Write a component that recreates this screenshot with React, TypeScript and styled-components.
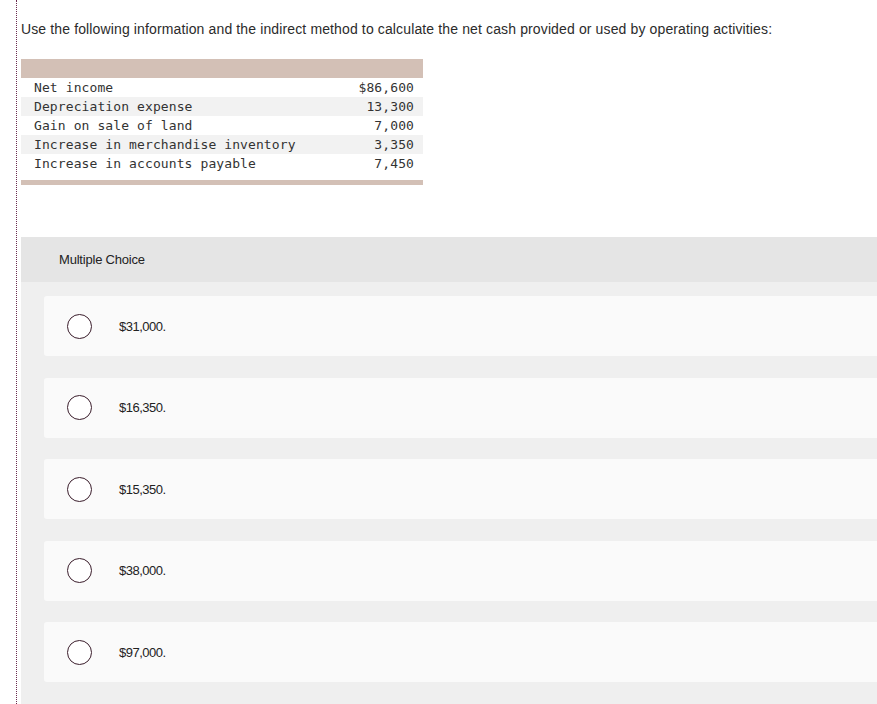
import React from "react";
import styled, { createGlobalStyle } from "styled-components";

const Global = createGlobalStyle`
    body {
        margin: 0;
        background: #fff;
        font-family: "Liberation Sans", Arial, sans-serif;
        color: #333;
    }
`

const Page = styled.div`
    margin-left: 16px;
    border-left: 1px dotted #6b2d4f;
    padding: 20px 0 0 4px;
    min-height: 100vh;
    box-sizing: border-box;
    overflow: hidden;
`

const Question = styled.p`
    margin: 0;
    font-size: 14px;
    line-height: 18px;
    letter-spacing: 0.13px;
    color: #2b2b2b;
`

const Table = styled.div`
    width: 402px;
    margin-top: 21px;
    padding-bottom: 7px;
    border-bottom: 5px solid #d3c0b6;
    font-family: "DejaVu Sans Mono", "Liberation Mono", monospace;
    font-size: 13px;
    letter-spacing: 0.1px;
    color: #333;
`

const TableHead = styled.div`
    height: 19px;
    background: #d3c0b6;
`

const Row = styled.div<{ shaded?: boolean }>`
    display: flex;
    justify-content: space-between;
    align-items: center;
    height: 19px;
    padding: 0 9px 0 13px;
    background: ${({ shaded }) => (shaded ? "#f2f2f2" : "#fff")};
`

const Choices = styled.div`
    margin-top: 52px;
    margin-right: -20px;
    background: #efefef;
    padding-bottom: 40px;
`

const ChoicesHead = styled.div`
    height: 45px;
    display: flex;
    align-items: center;
    padding-left: 38px;
    background: #e5e5e5;
    font-size: 13px;
    letter-spacing: -0.2px;
    color: #222;
`

const Options = styled.div`
    display: flex;
    flex-direction: column;
    gap: 21.5px;
    padding: 14px 0 0 23px;
`

const Option = styled.label`
    display: flex;
    align-items: center;
    height: 60px;
    padding-left: 23px;
    background: #fafafa;
    border-radius: 3px 0 0 3px;
    font-size: 13px;
    letter-spacing: -0.5px;
    color: #222;
`

const Radio = styled.span`
    width: 25px;
    height: 25px;
    box-sizing: border-box;
    border: 1.5px solid #3a1d2b;
    border-radius: 50%;
    background: #fff;
    margin-right: 27px;
    flex-shrink: 0;
`

const rows: [string, string][] = [
    ["Net income", "$86,600"],
    ["Depreciation expense", "13,300"],
    ["Gain on sale of land", "7,000"],
    ["Increase in merchandise inventory", "3,350"],
    ["Increase in accounts payable", "7,450"],
]

const answers = ["$31,000.", "$16,350.", "$15,350.", "$38,000.", "$97,000."]

const App = () => {
    return (
        <Page>
            <Global />
            <Question>
                Use the following information and the indirect method to calculate the net cash provided or used by operating activities:
            </Question>
            <Table>
                <TableHead />
                {rows.map(([label, value], i) => (
                    <Row key={label} shaded={i % 2 === 1}>
                        <span>{label}</span>
                        <span>{value}</span>
                    </Row>
                ))}
            </Table>
            <Choices>
                <ChoicesHead>Multiple Choice</ChoicesHead>
                <Options>
                    {answers.map((a) => (
                        <Option key={a}>
                            <Radio />
                            {a}
                        </Option>
                    ))}
                </Options>
            </Choices>
        </Page>
    )
}

export default App;
